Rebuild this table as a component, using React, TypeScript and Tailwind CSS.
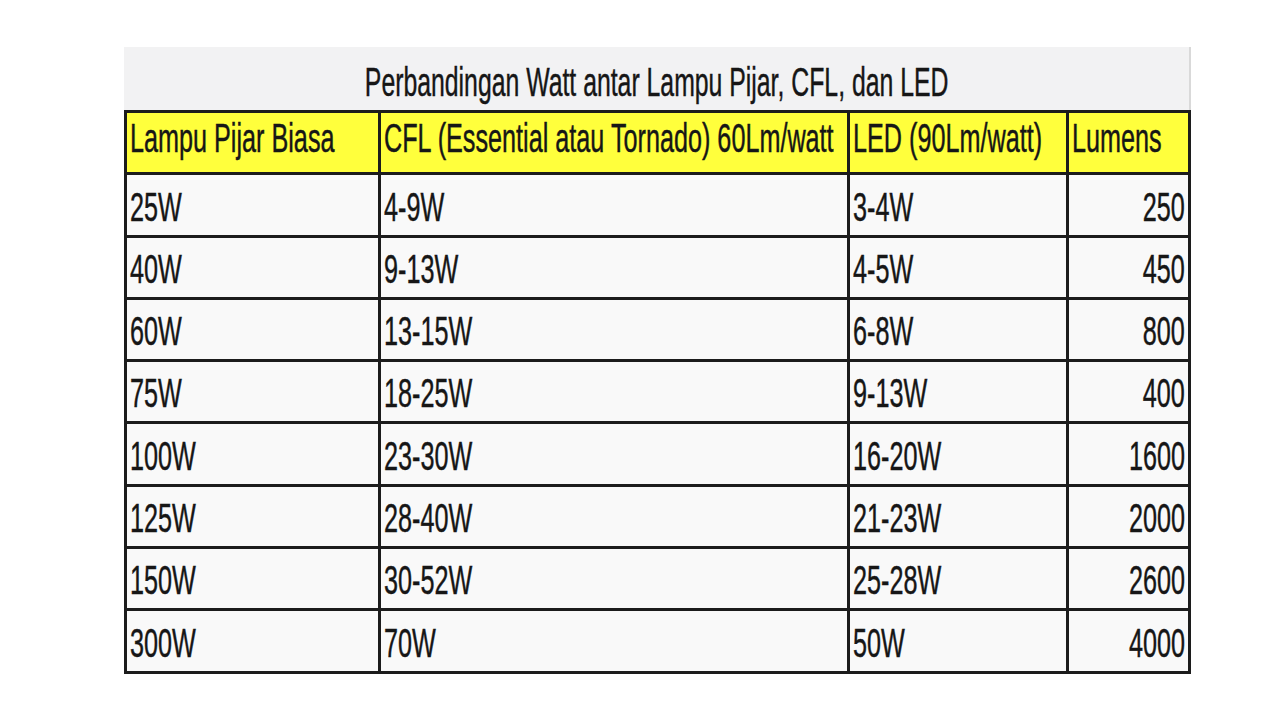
const rows: [string, string, string, string][] = [
  ["25W", "4-9W", "3-4W", "250"],
  ["40W", "9-13W", "4-5W", "450"],
  ["60W", "13-15W", "6-8W", "800"],
  ["75W", "18-25W", "9-13W", "400"],
  ["100W", "23-30W", "16-20W", "1600"],
  ["125W", "28-40W", "21-23W", "2000"],
  ["150W", "30-52W", "25-28W", "2600"],
  ["300W", "70W", "50W", "4000"],
];

const headers = [
  "Lampu Pijar Biasa",
  "CFL (Essential atau Tornado) 60Lm/watt",
  "LED (90Lm/watt)",
  "Lumens",
];

const Cell = ({ text, right, yellow }: { text: string; right?: boolean; yellow?: boolean }) => (
  <div
    className={`h-[59.3px] flex items-end overflow-hidden ${right ? "justify-end pr-[3px]" : "pl-[3px]"} ${
      yellow ? "bg-[#ffff3c] pb-[14px]" : "bg-[#f9f9f9] pb-[8px]"
    }`}
  >
    <span
      className={`inline-block whitespace-nowrap leading-none text-[40px] text-[#161616] scale-x-[0.63] [-webkit-text-stroke:0.45px_#161616] ${
        right ? "origin-right" : "origin-left"
      }`}
    >
      {text}
    </span>
  </div>
);

export default function App() {
  return (
    <div className="w-[1280px] h-[720px] bg-white pt-[47px] pl-[124px] font-['Liberation_Sans',Arial,sans-serif]">
      <div className="w-[1067px]">
        <div className="h-[63px] bg-[#f2f2f3] border-r-2 border-[#d9d9d9] flex items-end justify-center pb-[8px]">
          <span className="inline-block whitespace-nowrap leading-none text-[40px] text-[#161616] scale-x-[0.62] [-webkit-text-stroke:0.45px_#161616]">
            Perbandingan Watt antar Lampu Pijar, CFL, dan LED
          </span>
        </div>
        <div className="grid grid-cols-[251px_466px_216px_119px] gap-[3px] p-[3px] bg-[#1c1c1c]">
          {headers.map((h) => (
            <Cell key={h} text={h} yellow />
          ))}
          {rows.map((r) =>
            r.map((c, i) => <Cell key={r[0] + i} text={c} right={i === 3} />)
          )}
        </div>
      </div>
    </div>
  );
}
